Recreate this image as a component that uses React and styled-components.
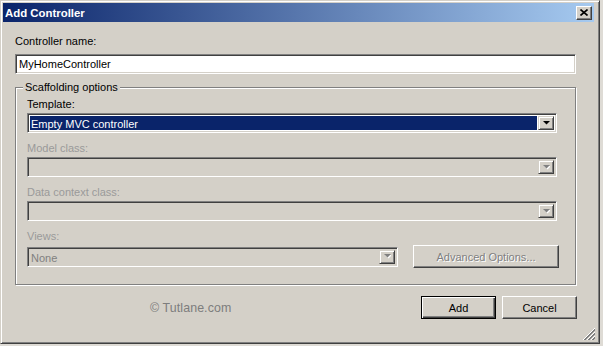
import React from 'react'
import styled, { createGlobalStyle } from 'styled-components'

const GlobalStyle = createGlobalStyle`
  html, body {
    margin: 0;
    padding: 0;
    background: #dedbd5;
  }
  body {
    font-family: "Liberation Sans", Arial, sans-serif;
    font-size: 11px;
    color: #000;
  }
`

const FACE = '#d4d0c8'

const Window = styled.div`
  position: relative;
  box-sizing: border-box;
  width: 600px;
  height: 344px;
  background: ${FACE};
  border: 1px solid;
  border-color: ${FACE} #404040 #404040 ${FACE};
  box-shadow: inset 1px 1px 0 #fff, inset -1px -1px 0 #808080;
  padding: 2px 5px 0 2px;
  display: flex;
  flex-direction: column;
`

const TitleBar = styled.div`
  height: 19px;
  display: flex;
  align-items: center;
  justify-content: space-between;
  padding: 0 2px 0 2px;
  background: linear-gradient(to right, #0a246a 0%, #a6caf0 100%);
`

const Title = styled.span`
  color: #fff;
  font-weight: bold;
  font-size: 11.4px;
`

const CloseButton = styled.button`
  box-sizing: border-box;
  width: 16px;
  height: 14px;
  padding: 0;
  display: flex;
  align-items: center;
  justify-content: center;
  background: ${FACE};
  border: 1px solid;
  border-color: #fff #404040 #404040 #fff;
  box-shadow: inset -1px -1px 0 #808080;
`

const Content = styled.div`
  flex: 1;
  display: flex;
  flex-direction: column;
  padding: 0 18px 0 12px;
`

const Label = styled.div`
  height: 13px;
  line-height: 13px;
  color: ${p => (p.$disabled ? '#9a9a9a' : '#000')};
  margin: ${p => p.$top || 0}px 0 ${p => p.$bottom ?? 2}px 0;
`

const sunken = `
  box-sizing: border-box;
  border: 1px solid;
  border-color: #808080 #fff #fff #808080;
  box-shadow: inset 1px 1px 0 #404040, inset -1px -1px 0 ${FACE};
`

const TextInput = styled.div`
  ${sunken}
  height: 20px;
  width: 100%;
  background: #fff;
  padding: 0 3px;
  line-height: 18px;
`

const Group = styled.fieldset`
  box-sizing: border-box;
  width: 561px;
  margin: 7px 0 0 0;
  padding: 4px 18px 16px 11px;
  border: 1px solid #808080;
  box-shadow: inset 1px 1px 0 #fff, 1px 1px 0 #fff;
  display: flex;
  flex-direction: column;
  min-inline-size: 0;
`

const Legend = styled.legend`
  padding: 0 2px;
  margin-left: -4px;
  height: 13px;
  line-height: 13px;
  background: ${FACE};
`

const Field = styled.div`
  display: flex;
  flex-direction: column;
  margin-bottom: 9px;
  &:last-child { margin-bottom: 0; }
`

const Combo = styled.div`
  ${sunken}
  height: 20px;
  width: ${p => (p.$width ? `${p.$width}px` : '100%')};
  display: flex;
  align-items: stretch;
  padding: 2px;
  background: ${p => (p.$disabled ? FACE : '#fff')};
`

const ComboText = styled.div`
  flex: 1;
  line-height: 16px;
  padding-left: 1px;
  margin-right: 1px;
  background: ${p => (p.$selected ? '#0a246a' : 'transparent')};
  color: ${p => (p.$selected ? '#fff' : p.$disabled ? '#808080' : '#000')};
`

const ArrowButton = styled.div`
  box-sizing: border-box;
  width: 16px;
  display: flex;
  align-items: center;
  justify-content: center;
  background: ${FACE};
  border: 1px solid;
  border-color: ${FACE} #404040 #404040 ${FACE};
  box-shadow: inset 1px 1px 0 #fff, inset -1px -1px 0 #808080;
`

const Row = styled.div`
  display: flex;
  align-items: center;
  justify-content: space-between;
  margin-right: -2px;
`

const Button = styled.button`
  box-sizing: border-box;
  width: ${p => p.$width || 75}px;
  height: 23px;
  padding: 0;
  font-family: inherit;
  font-size: 11px;
  background: ${FACE};
  color: ${p => (p.$disabled ? '#808080' : '#000')};
  text-shadow: ${p => (p.$disabled ? '1px 1px 0 #fff' : 'none')};
  border: 1px solid;
  border-color: ${p => (p.$default ? '#000' : '#fff #404040 #404040 #fff')};
  box-shadow: ${p =>
    p.$default
      ? 'inset 1px 1px 0 #fff, inset -1px -1px 0 #404040, inset -2px -2px 0 #808080'
      : 'inset -1px -1px 0 #808080'};
`

const Footer = styled.div`
  display: flex;
  align-items: center;
  margin-top: 11px;
`

const Watermark = styled.div`
  margin-left: 135px;
  flex: 1;
  font-size: 12.4px;
  color: #7d7d7d;
  letter-spacing: 0.1px;
`

const Buttons = styled.div`
  display: flex;
  gap: 6px;
  margin-right: -1px;
`

const Grip = styled.svg`
  position: absolute;
  right: 4px;
  bottom: 3px;
`

const Arrow = ({ disabled }) => (
  <svg width="7" height="5" viewBox="0 0 7 5">
    {disabled && <path d="M1 1h7L4.5 4.5z" fill="#fff" />}
    <path d="M0 0h7L3.5 3.5z" fill={disabled ? '#808080' : '#000'} />
  </svg>
)

const ComboBox = ({ value, selected, disabled, width }) => (
  <Combo $disabled={disabled} $width={width}>
    <ComboText $selected={selected} $disabled={disabled}>{value}</ComboText>
    <ArrowButton>
      <Arrow disabled={disabled} />
    </ArrowButton>
  </Combo>
)

export default function App() {
  return (
    <>
      <GlobalStyle />
      <Window>
        <TitleBar>
          <Title>Add Controller</Title>
          <CloseButton aria-label="Close">
            <svg width="8" height="7" viewBox="0 0 8 7">
              <path d="M0.5 0.5L7.5 6.5M7.5 0.5L0.5 6.5" stroke="#000" strokeWidth="1.6" />
            </svg>
          </CloseButton>
        </TitleBar>
        <Content>
          <Label $top={13} $bottom={6}>Controller name:</Label>
          <TextInput>MyHomeController</TextInput>
          <Group>
            <Legend>Scaffolding options</Legend>
            <Field>
              <Label>Template:</Label>
              <ComboBox value="Empty MVC controller" selected />
            </Field>
            <Field>
              <Label $disabled>Model class:</Label>
              <ComboBox disabled />
            </Field>
            <Field>
              <Label $disabled>Data context class:</Label>
              <ComboBox disabled />
            </Field>
            <Field>
              <Label $disabled>Views:</Label>
              <Row>
                <ComboBox value="None" disabled width={371} />
                <Button $width={146} $disabled disabled>Advanced Options...</Button>
              </Row>
            </Field>
          </Group>
          <Footer>
            <Watermark>© Tutlane.com</Watermark>
            <Buttons>
              <Button $default>Add</Button>
              <Button>Cancel</Button>
            </Buttons>
          </Footer>
        </Content>
        <Grip width="12" height="12" viewBox="0 0 12 12">
          {[0, 4, 8].map(k => (
            <g key={k}>
              <line x1={12} y1={k} x2={k} y2={12} stroke="#fff" strokeWidth="1" />
              <line x1={12} y1={k + 1} x2={k + 1} y2={12} stroke="#808080" strokeWidth="1" />
              <line x1={12} y1={k + 2} x2={k + 2} y2={12} stroke="#808080" strokeWidth="1" />
            </g>
          ))}
        </Grip>
      </Window>
    </>
  )
}
